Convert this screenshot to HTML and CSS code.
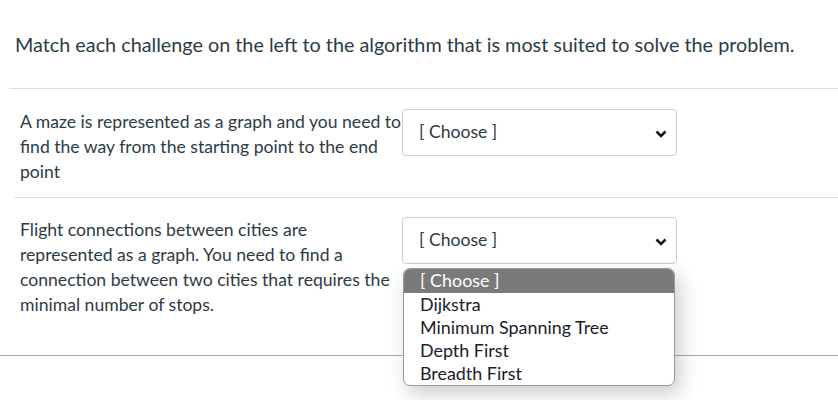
FILE: index.html
```html
<!DOCTYPE html>
<html>
<head>
<meta charset="utf-8">
<link rel="stylesheet" href="styles.css">
</head>
<body>
<div class="question">
  <p class="prompt">Match each challenge on the left to the algorithm that is most suited to solve the problem.</p>
  <div class="answers">
    <div class="row">
      <div class="challenge">A maze is represented as a graph and you need to find the way from the starting point to the end point</div>
      <div class="select"><span>[ Choose ]</span>
        <svg class="chev" width="12" height="8" viewBox="0 0 12 8"><path d="M1.5 1.5 L6 6 L10.5 1.5" fill="none" stroke="#111" stroke-width="2.5"/></svg>
      </div>
    </div>
    <div class="row row-last">
      <div class="challenge">Flight connections between cities are represented as a graph. You need to find a connection between two cities that requires the minimal number of stops.</div>
      <div class="select-wrap">
        <div class="select"><span>[ Choose ]</span>
          <svg class="chev" width="12" height="8" viewBox="0 0 12 8"><path d="M1.5 1.5 L6 6 L10.5 1.5" fill="none" stroke="#111" stroke-width="2.5"/></svg>
        </div>
        <ul class="menu">
          <li class="active">[ Choose ]</li>
          <li>Dijkstra</li>
          <li>Minimum Spanning Tree</li>
          <li>Depth First</li>
          <li>Breadth First</li>
        </ul>
      </div>
    </div>
  </div>
</div>
</body>
</html>
```
FILE: styles.css
```css
html, body {
  margin: 0;
  padding: 0;
  background: #fff;
}
body {
  font-family: Lato, "Open Sans", sans-serif;
  color: #2d3b45;
  width: 838px;
  height: 400px;
  overflow: hidden;
}
.prompt {
  margin: 0;
  padding: 31px 15px 0 6px;
  height: 57px;
  font-size: 19.8px;
  line-height: 26px;
  border-bottom: 1px solid #dcdcdc;
  margin-left: 9px;
}
.row {
  display: flex;
  align-items: flex-start;
  padding: 20px 0 13px 6px;
  border-bottom: 1px solid #dcdcdc;
  margin-left: 14px;
}
.row-last {
  margin-left: 0;
  padding-top: 19px;
  padding-left: 20px;
  padding-bottom: 38px;
  border-bottom: 1px solid #a8a8a8;
}
.challenge {
  width: 382px;
  font-size: 17.6px;
  line-height: 25px;
}
.select-wrap {
  position: relative;
}
.select {
  box-sizing: border-box;
  width: 275px;
  height: 47px;
  border: 1px solid #c7cdd1;
  border-radius: 4px;
  display: flex;
  align-items: center;
  justify-content: space-between;
  padding: 0 9px 0 16px;
  font-size: 17.6px;
  color: #2d3b45;
  background: #fff;
}
.select span {
  margin-top: -2px;
}
.chev {
  display: block;
  margin-top: 3px;
}
.menu {
  position: absolute;
  left: 1px;
  top: 51px;
  width: 272px;
  box-sizing: border-box;
  margin: 0;
  padding: 0;
  list-style: none;
  background: #fff;
  border: 1px solid #9a9a9a;
  border-radius: 7px;
  overflow: hidden;
  box-shadow: 5px 8px 20px rgba(0,0,0,0.2);
  font-size: 17.9px;
  color: #1c1c2c;
}
.menu li {
  height: 23px;
  line-height: 23px;
  padding-left: 16px;
}
.menu li.active {
  background: #7a7a7a;
  color: #fff;
  height: 24px;
}
```
